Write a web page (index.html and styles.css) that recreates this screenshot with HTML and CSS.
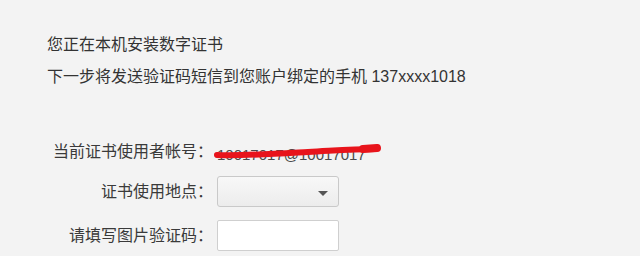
FILE: index.html
```html
<!DOCTYPE html>
<html lang="zh-CN">
<head>
<meta charset="utf-8">
<title>安装数字证书</title>
<link rel="stylesheet" href="styles.css">
</head>
<body>
<div class="page">
  <div class="intro">
    <p class="line1">您正在本机安装数字证书</p>
    <p class="line2">下一步将发送验证码短信到您账户绑定的手机 <span class="num">137xxxx1018</span></p>
  </div>
  <div class="form">
    <div class="label">当前证书使用者帐号：</div>
    <div class="account"><span class="acct-text">10017017@10017017</span><svg class="scribble" width="170" height="16" viewBox="0 0 170 16"><path d="M4 11 C 30 12, 60 10, 95 8 S 140 5, 162 5" fill="none" stroke="#e8141b" stroke-width="6" stroke-linecap="round"/><path d="M150 5 L164 4" stroke="#e8141b" stroke-width="8" stroke-linecap="round"/></svg></div>
    <div class="label">证书使用地点：</div>
    <div class="select"><span class="arrow"></span></div>
    <div class="label">请填写图片验证码：</div>
    <div class="input"></div>
  </div>
</div>
</body>
</html>
```
FILE: styles.css
```css
html, body {
  margin: 0;
  padding: 0;
  background: #f3f3f3;
}
body {
  width: 640px;
  height: 256px;
  overflow: hidden;
  font-family: "Liberation Sans", "Noto Sans CJK SC", sans-serif;
  color: #333;
}
.page {
  padding: 35px 0 0 47px;
}
.intro p {
  margin: 0 0 12px 0;
  line-height: 20px;
  font-size: 16px;
}
.num {
  font-family: "Liberation Sans", sans-serif;
}
.form {
  margin-top: 54px;
  display: grid;
  grid-template-columns: 166px 122px;
  column-gap: 4px;
  row-gap: 13px;
  align-items: center;
}
.label {
  text-align: right;
  font-size: 16px;
  line-height: 22px;
  color: #3a3a3a;
  white-space: nowrap;
}
.account {
  position: relative;
  height: 22px;
  font-size: 15px;
  line-height: 28px;
  color: #4a4a4a;
  white-space: nowrap;
}
.acct-text {
  position: relative;
}
.scribble {
  position: absolute;
  left: -4px;
  top: 3px;
}
.select {
  position: relative;
  height: 29px;
  border: 1px solid #c9c9c9;
  border-radius: 3px;
  background: linear-gradient(#f8f8f8, #ececec);
}
.arrow {
  position: absolute;
  right: 10px;
  top: 14px;
  width: 0;
  height: 0;
  border-left: 5px solid transparent;
  border-right: 5px solid transparent;
  border-top: 5px solid #555;
}
.input {
  height: 29px;
  border: 1px solid #cfcfcf;
  border-radius: 2px;
  background: #fff;
}
```
